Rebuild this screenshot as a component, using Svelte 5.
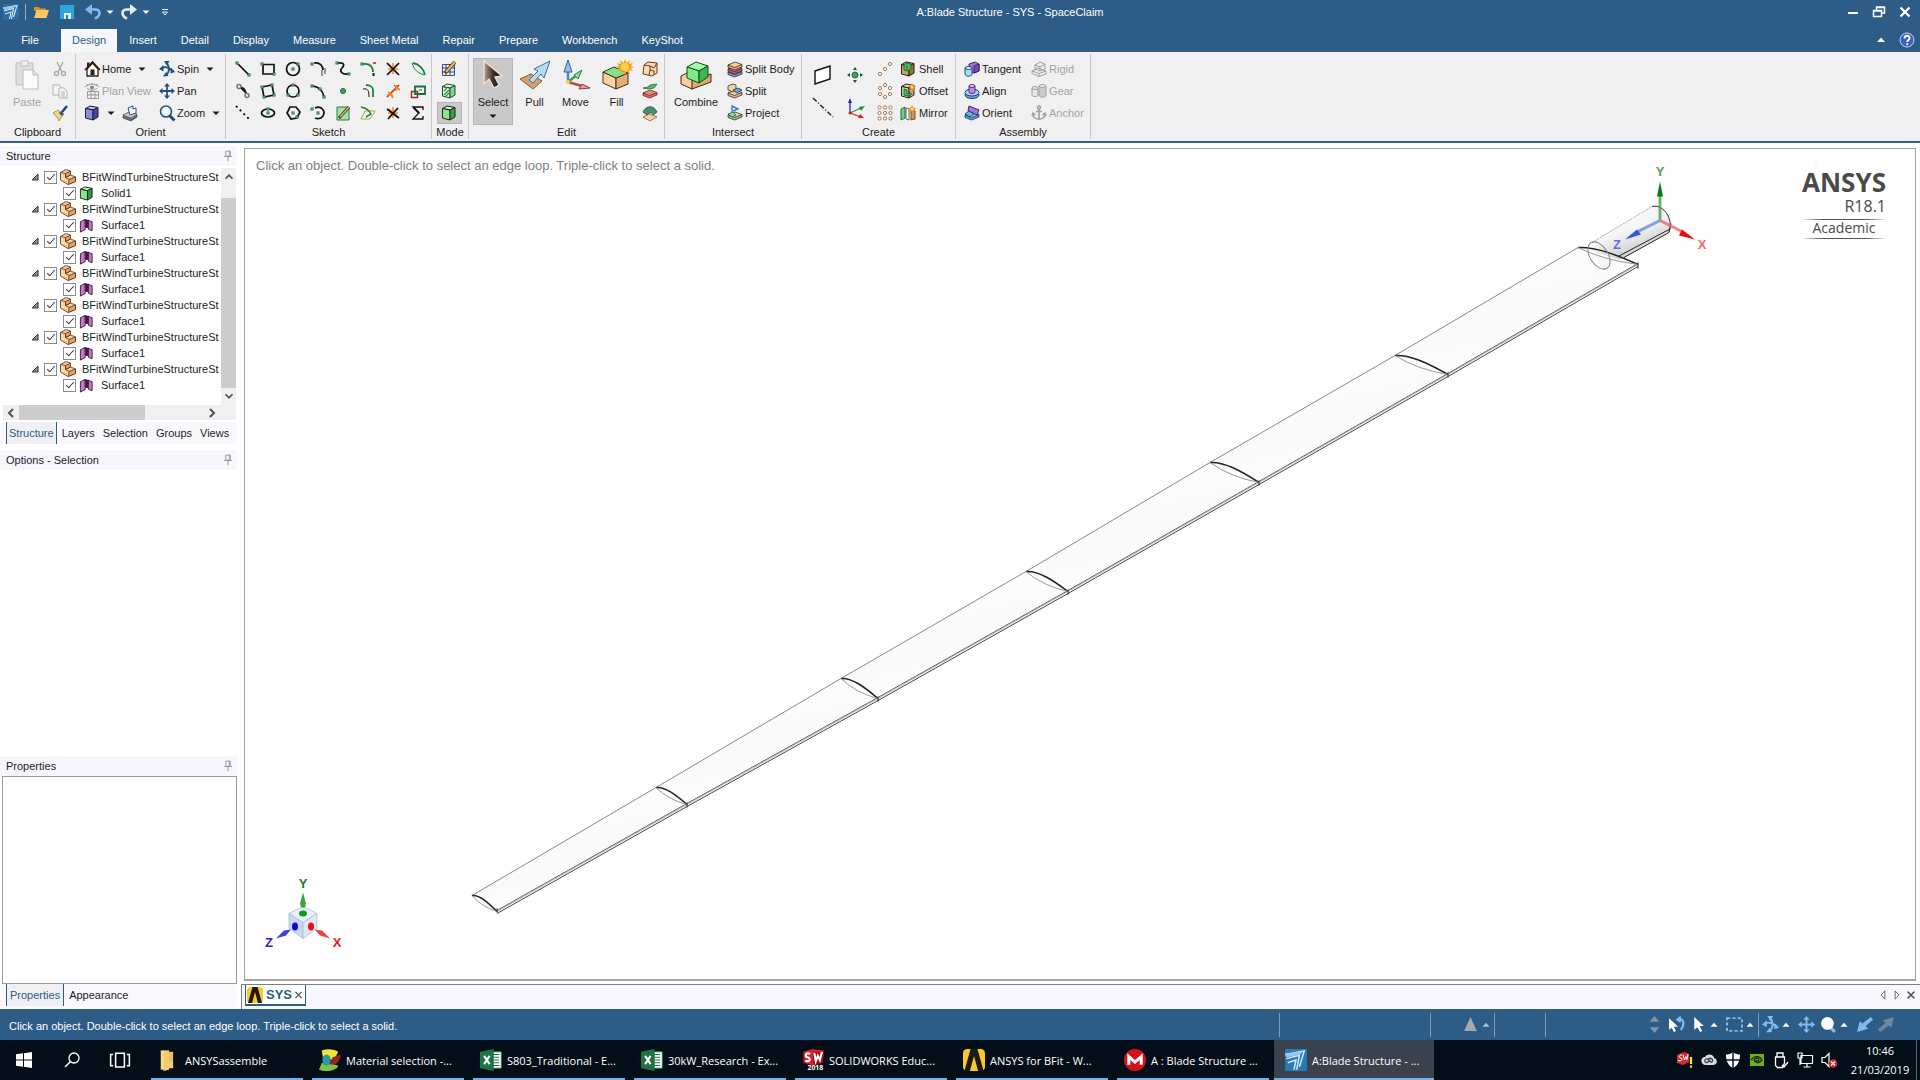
<script>
  const cube = (top, left, right, line = '#222') =>
    `<g stroke="${line}" stroke-width="1" stroke-linejoin="round"><path fill="${top}" d="M1.500 3.500 6 1l8 1.500L9.500 5z"/><path fill="${left}" d="M1.500 3.500 9 5v10L1.500 13z"/><path fill="${right}" d="M9 5l5-2.500v9.500L9 15z"/></g>`;
  const slab = (y, top, side, line = '#333') =>
    `<g stroke="${line}" stroke-width=".8" stroke-linejoin="round"><path fill="${side}" d="M1 ${y}v2.500l6.500 2.500 7.500-3v-2.500z"/><path fill="${top}" d="M1 ${y} 8 ${y - 3}l7 2.500-7.500 3z"/></g>`;
  const node = (x, y) => `<rect x="${x - 1}" y="${y - 1}" width="2" height="2" fill="#fff" stroke="#17703a" stroke-width="1"/>`;
  const cross4 = (c) =>
    `<path fill="none" stroke="${c}" stroke-width="1.800" d="M8 2v12M2 8h12"/><path fill="${c}" d="M8 0l3 3.500H5zM8 16l3-3.500H5zM0 8l3.500-3v6zM16 8l-3.500-3v6z"/>`;
  const orbit = (c) =>
    `<path fill="none" stroke="${c}" stroke-width="1.800" d="M7 2c4 3 4 9 0 12M3 7c4-2 7 0 11 3"/><path fill="${c}" d="M5 0h5.500L8 4.500zM4 15.500l5.500-.5L7 11zM0 8l4.500-4v6.500zM16 11l-4.500 1.500.5-6z"/>`;
  const dk = 'fill="none" stroke="#111" stroke-width="1.700"';
  const burst = '<path stroke="#f0882a" stroke-width="1.500" d="M8 2v11M3 8h10M4 4l8 8M12 4l-8 8"/>';
  const bolt = '<path fill="#e08a18" d="M12 0l1 2.500L16 3l-2 2 .5 3-2.500-1.500L9.500 8l.5-3-2-2 3-.5z"/><circle cx="12" cy="4" r="1.500" fill="#ffe08a"/>';
  const rings = (pts) => pts.map(([x, y]) => `<circle cx="${x}" cy="${y}" r="1.600" fill="#fff" stroke="#a5764e"/>`).join('');
  const stair =
    '<g stroke="#6b3f18" stroke-width=".9" stroke-linejoin="round"><path fill="#f9d4aa" d="M.5 3.500 6 .5l4.500 1.500v4l5 2v4.500L8 15.500.5 11z"/><path fill="#dba268" d="M5.500 4.500l5-2.500v4L5.500 8.500z"/><path fill="#dba268" d="M9 10.500 15.500 8v4.500L8.500 15.500z"/><path fill="none" d="M.5 3.500l5 1v4L9 10.500M5.500 8.500l5-2.500"/></g>';
  const spaceclaim = (bg) =>
    `<rect width="16" height="16" rx="1" fill="${bg}"/><g fill="none" stroke="#d9eaf7" stroke-width="1.100"><path d="M0 4l14-2.500L10.500 13"/><path d="M1 7l9.500-2.500L8.500 15"/><path d="M2 10l6-2-1.500 7"/></g><path fill="#9cc6e8" d="M0 3.500l14-2-4 3-9 1.500z"/>`;
  const ansys = '<rect width="16" height="16" rx="3" fill="#f9c928"/><path fill="#1d1a16" d="M5.500 0h5L15 16h-4L8 5 5 16H1z"/>';
  const excel =
    '<path fill="#fff" stroke="#1f7244" stroke-width=".7" d="M8 2h7.500v12H8z"/><path stroke="#1f7244" stroke-width=".9" d="M9 4h5M9 6h5M9 8h5M9 10h5M9 12h5"/><path fill="#1f7244" d="M0 2 10 0v16L0 14z"/><path stroke="#fff" stroke-width="1.500" d="M3 5l4 6M7 5l-4 6"/>';

  const icons = {
    app: spaceclaim('#2a6ca3'),
    space: spaceclaim('#2779b8'),
    ansys, excel, stair,
    folder: '<path fill="#d9912d" d="M1 3h5l1 1.500h6V7H1z"/><path fill="#fbc56a" d="M3.500 6H16l-2.500 8H1z"/>',
    save: '<path fill="#2ba7de" d="M1 1h14v14H1z"/><path fill="#eaf5fc" d="M5 9h7v6H5z"/><path fill="#2b78a8" d="M7 11h2v4H7z"/>',
    undo: '<path fill="none" stroke="#7fbbf2" stroke-width="2.600" d="M3 5.500h7c6 0 6 6 0 9"/><path fill="#7fbbf2" d="M0 5.500L7 0v11z"/>',
    redo: '<path fill="none" stroke="#e4edf5" stroke-width="2.600" d="M13 5.500H6c-6 0-6 6 0 9"/><path fill="#e4edf5" d="M16 5.500L9 0v11z"/>',
    custom: '<path fill="none" stroke="#e6eef5" d="M5 5.500h6M5.500 8h5L8 11z"/>',
    down: '<path fill="currentColor" d="M4.500 6.500h7L8 10z"/>',
    up: '<path fill="currentColor" d="M4 10h8L8 5.500z"/>',
    min: '<path stroke="#fff" stroke-width="2" d="M3 9h10"/>',
    restore: '<path fill="none" stroke="#fff" stroke-width="1.500" d="M2.500 6.500h8v6h-8zM5.500 6V3h8v6H11M2 7h9M5 3.500h9"/>',
    close: '<path stroke="#fff" stroke-width="2.200" d="M3.500 3.500l9 9M12.500 3.500l-9 9"/>',
    help: '<circle cx="8" cy="8" r="7" fill="#3a62c4" stroke="#c8d6ee"/><path fill="none" stroke="#fff" stroke-width="1.900" d="M5.500 6.500c0-4 5.500-3.500 5 0-.3 1.500-2.300 1.500-2.300 3.500M8.200 11.200v1.800"/>',
    paste: '<g stroke="#bdbdbd"><path fill="#dedede" d="M5 4h17v22H5z"/><path fill="#eee" d="M10 2h7v5h-7z"/><path fill="#fbfbfb" d="M12 11h10l5 5v14H12z"/><path fill="#e4e4e4" d="M22 11v5h5z"/></g>',
    cut: '<g fill="none" stroke="#a9a9a9" stroke-width="1.400"><path d="M5 1l5 10M11 1 6 11"/><circle cx="4.500" cy="12.500" r="2"/><circle cx="11.500" cy="12.500" r="2"/></g>',
    copy: '<g fill="#f4f4f4" stroke="#b3b3b3"><path d="M1 2h6l2 2v8H1z"/><path d="M7 5h5l3 3v7H7z"/><path d="M9 9h4M9 11h4M9 13h4"/></g>',
    brush: '<path fill="#ecd57c" stroke="#9b8434" stroke-width=".8" d="M1 8l5-3 5 5-4 6c-1-3-3-5-6-8z"/><path stroke="#44506b" stroke-width="3" d="M8 7l3 3"/><path stroke="#1e3f8a" stroke-width="2.500" d="M10 7l5-6"/>',
    home: '<path fill="#fffbe8" stroke="#222" stroke-width="1.300" d="M3 8v7h11V8L8.500 2z"/><path fill="none" stroke="#3a1a12" stroke-width="1.600" d="M1 9l7.500-8L16 9"/><path fill="#223" d="M6.500 8.500h4V14h-4zM3 1.500h2.500V5L3 7z"/>',
    plan: '<g fill="none" stroke="#999"><path d="M1 4c4-4 10-4 14 0M3 5c3 3 7 3 10 0M3 1l1 2M8 0v1.500M13 1l-1 2"/><path d="M3.500 8.500h11v7h-11zM3 12h11M7 8v7M11 8v7"/></g><circle cx="8" cy="4.500" r="2" fill="#888"/>',
    bluecube: cube('#b9b9f8', '#8b8bea', '#4545ad'),
    scan: '<path fill="#e7c79b" stroke="#44506b" stroke-width=".8" d="M1 10l6-3 8 2-6 4z"/><path fill="#fff" stroke="#1e4fa0" d="M6 3l5-2v3l3-1v5l-6 2z"/><path fill="#577fa8" stroke="#223" stroke-width=".6" d="M1 11l8 3 6-4v2l-6 4-8-3z"/>',
    spin: orbit('#25517e'), pan: cross4('#25517e'),
    lens: '<path stroke="#1e4a75" stroke-width="3" d="M10.500 10.500l5 5"/><circle cx="7" cy="6.500" r="5.500" fill="#f2f7fb" stroke="#25517e" stroke-width="1.600"/>',
    s0: `<path ${dk} d="M3 3l11 11"/>${node(2, 2)}${node(14, 14)}`,
    s1: `<path ${dk} d="M3 3.500h11V13H3z"/>${node(2, 3)}${node(14, 13)}`,
    s2: `<circle cx="8" cy="8" r="6.500" ${dk}/>${node(8, 8)}${node(13, 3)}`,
    s3: `<path ${dk} d="M4 2c6-1 9 3 9 7"/><path stroke="#777" stroke-width="1.500" d="M12 9v6M15 7v6"/>${node(2, 3)}`,
    s4: `<path ${dk} d="M3 2c6-1 7 2 4 5s0 7 6 6"/>${node(2, 2)}${node(14, 13)}`,
    s5: `<path fill="none" stroke="#218040" stroke-width="1.900" d="M3 3c7-1 10 3 10 8"/><path stroke="#e04b30" stroke-width="2" d="M13 2h3"/><path stroke="#222" stroke-width="2" d="M13.500 12v3"/>${node(2, 3)}`,
    s6: `${burst}<path ${dk} d="M2 2l6 6 6-6M8 8l-6 6M8 8l6 6"/>`,
    s7: `<path fill="none" stroke="#218040" stroke-width="1.800" d="M3 2c6 1 11 6 12 12"/><path fill="none" stroke="#218040" d="M2 2c2 7 6 10 12 12"/>`,
    s8: `<path stroke="#222" stroke-width="1.700" d="M4 4c6 0 6 4 8 8"/><circle cx="4" cy="3.500" r="2" fill="#eee" stroke="#777" stroke-width="1.500"/><circle cx="12" cy="12.500" r="2" fill="#eee" stroke="#777" stroke-width="1.500"/>`,
    s9: `<path ${dk} d="M2 4l10-2 2 10-10 2z"/>${node(2, 4)}${node(12, 2)}${node(14, 12)}${node(4, 14)}`,
    s10: `<circle cx="8" cy="8" r="6" ${dk}/>${node(8, 2)}${node(3, 12)}${node(13, 12)}`,
    s11: `<path ${dk} d="M3 3c6 1 10 5 11 11"/>${node(2, 3)}${node(10, 6)}${node(14, 14)}`,
    s12: '<circle cx="8" cy="8" r="2.500" fill="#3f9b5f" stroke="#17703a"/>',
    s13: '<path fill="none" stroke="#111" d="M3 6c5-1 6 2 6 8"/><path fill="none" stroke="#218040" stroke-width="1.800" d="M6 2c4 0 7 2 7 5v7"/>',
    s14: '<g stroke-width="1.700"><path stroke="#c3302a" d="M2 14 14 2"/><path stroke="#f0882a" d="M9 2l3 3 3 2M11 2v6M3 9l3 2 2 4M2 12h6"/></g>',
    s15: '<path fill="none" stroke="#a02622" stroke-width="1.400" d="M1.500 8.500h6v6h-6z"/><path fill="none" stroke="#17703a" stroke-width="1.800" d="M5 3.500h10V11H5z"/><path stroke="#17703a" d="M9 7h3"/>',
    s16: '<path stroke="#111" stroke-width="2" stroke-dasharray="2 3.300" d="M1 1l14 14"/>',
    s17: `<ellipse cx="8" cy="8" rx="6.500" ry="4" ${dk}/>${node(8, 8)}${node(8, 4)}`,
    s18: `<path ${dk} d="M5 2l6 0 4 5-3 6-6 1-4-6z"/>${node(8, 8)}${node(12, 12)}`,
    s19: `<path ${dk} d="M5 3c6-3 11 3 8 8-2 3-6 3-8 2"/>${node(2, 4)}${node(8, 8)}`,
    s20: '<path fill="#a5e0aa" stroke="#2e7a44" d="M2 2h12v13H2z"/><path stroke="#42352a" stroke-width="3" d="M4 13 14 2"/><path stroke="#d8b173" stroke-width="1.500" d="M5 12l9-10"/>',
    s21: '<path fill="#eef7e8" stroke="#9db03a" d="M1 14 5 6h10l-5 8z"/><path fill="none" stroke="#218040" stroke-width="1.500" d="M1 2c5 1 8 3 10 7l-5 3"/>',
    s22: `${burst}<path ${dk} d="M2 4l12 9M13 3 3 14"/>`,
    s23: '<path fill="none" stroke="#111" stroke-width="1.300" d="M13 5V2H3l6 6-6 6h10v-3"/><path stroke="#111" stroke-width="2" d="M3.500 2.500 9 8"/>',
    m0: '<path fill="#e6eaf6" stroke="#2b3d77" stroke-width=".9" d="M1.500 3.500h12v11h-12zM1 7h12M1 11h12M5 3v11M9 3v11"/><path stroke="#4d3b1d" stroke-width="3.500" d="M4 12 14 1"/><path stroke="#e9bd4a" stroke-width="2" d="M5 11l9-10"/>',
    m1: '<g stroke="#1f4c2c" fill="#e4f5e6"><path d="M1.500 3.500 9 5v10L1.500 13z"/><path d="M1.500 3.500 6 1l8 1.500L9.500 5z"/><path fill="#7fd68a" d="M9 5l5-2.500v9.500L9 15z"/><path stroke="#2f9440" stroke-width="1.300" d="M3 8l3-3M3 12l5-5M5 13l3-3"/></g>',
    m2: cube('#c5f7c8', '#8ae892', '#3ba14c'),
    solid: cube('#b7f5bb', '#85e68d', '#2f9440'),
    surface: '<path fill="#43154a" d="M5 1l6 1v9l-6-1z"/><path fill="#c07ac0" stroke="#4b1a52" d="M1.500 4 6.500 2v10.500l-5 2.500zM10 2.500l4 1.500v9.500l-4-1.500z"/>',
    arrow: '<defs><linearGradient id="ar" x1="0" x2="1"><stop stop-color="#b0a49c"/><stop offset=".5" stop-color="#3b302b"/><stop offset="1" stop-color="#120c0a"/></linearGradient></defs><path fill="url(#ar)" stroke="#f7e0cc" stroke-width="1.300" d="M7 2v23l5-5 5 9 5-3-4-8 7-1z"/>',
    pull: '<path fill="#d0a074" stroke="#8c5a2c" d="M1 20l11-5 11 7-9 8z"/><path fill="#b9dbf2" stroke="#3a6f9c" d="M31 2 15 10l4 2-9 9 4 3 8-9 3 4z"/>',
    move: '<g stroke-width="2.500" fill="none"><path stroke="#4a8cc0" d="M8 23V8"/><path stroke="#3f9b5f" d="M8 23l10-8"/><path stroke="#b34a4a" d="M8 23l14 4"/></g><path fill="#8fc2ea" stroke="#2c6594" d="M8 1l4 12H4z"/><path fill="#8fdca0" stroke="#2e7a44" d="M22 11l-4 9-4-4z"/><path fill="#e69a9a" stroke="#8c3636" d="M30 29l-11 1 3-5z"/><circle cx="8" cy="23" r="2" fill="#f1d34a"/>',
    fill: '<g stroke="#4a2e14"><path fill="#f8d2a5" d="M2 13v11l13 6V19z"/><path fill="#e2ae7a" d="M15 19v11l12-5V14z"/><path fill="#7fe58a" d="M2 13l11-5 14 6-12 5z"/></g><path fill="#f0a51c" d="M24 0l1.500 4L29 1l-1 4 4-1-2 3 3 1-3 1 2 3-4-1 1 4-3.500-3L24 16l-1.500-4-3.500 3 1-4-4 1 2-3-3-1 3-1-2-3 4 1-1-4 3.500 3z"/><circle cx="24" cy="8" r="4" fill="#fccf4e"/>',
    e0: '<g fill="#f9d9b8" stroke="#6b3f18"><path d="M2 4l4-3 9 1v10l-5 3-9-2z"/><path d="M2 4l6 1v4l-1 5M8 5l4 2 3-5M8 9l4 1v4" fill="none"/></g>',
    e1: slab(10, '#e58b84', '#cf6660', '#7a2d28') + '<path fill="#58b96b" stroke="#22683a" stroke-width=".8" d="M1 5l5-1 2-2 7-1-3 4-5 1z"/>',
    e2: '<path fill="#f3cfa9" stroke="#8c5a2c" stroke-width=".8" d="M1 12l6-3 8 3-7 4z"/><path fill="#46926a" stroke="#1f4c3a" stroke-width=".8" d="M1 7c3-7 11-7 14 0l-4 3c0-3-4-3-6 0z"/>',
    combine: '<g stroke="#3f2510"><path fill="#f6cfa3" d="M1 17l8-4 10 3v9l-7 5-11-5z"/><path fill="#e0a870" d="M12 21l19-6v8l-19 7z"/></g><g stroke="#134d1d"><path fill="#a5f5a8" d="M7 8l9-5 12 4-9 5z"/><path fill="#7eea85" d="M7 8l12 4v12L7 19z"/><path fill="#3fb450" d="M19 12l9-5v11l-9 6z"/></g>',
    i0: slab(11, '#8fb7ea', '#6a94d0') + slab(8, '#e8707c', '#cf5060') + slab(4, '#f6cfa3', '#e0a870'),
    i1: slab(10, '#f6cfa3', '#e7b67f') + '<path fill="#f6cfa3" stroke="#333" stroke-width=".8" d="M1 3l5-2 3 1v5l-3 2-5-2z"/><path fill="#6ea8e8" stroke="#234" stroke-width=".8" d="M6 7l5-2 4 2-5 3z"/>',
    i2: slab(10, '#f6cfa3', '#8fc796') + '<path fill="#8fe09a" stroke="#225c35" stroke-width=".8" d="M1 9l5-2 3 3-4 2z"/><path fill="none" stroke="#3b7cc4" stroke-width="1.400" d="M5 8V1l6 3-5 2"/>',
    plane: '<path fill="#fff" stroke="#111" stroke-width="1.400" d="M3 7l15-5v13L3 20z"/>',
    axis: '<path stroke="#222" stroke-width="1.400" stroke-dasharray="5 2 1 2" d="M1 1l20 19"/>',
    point: '<circle cx="11" cy="11" r="3" fill="#3f9b5f" stroke="#17703a"/><path fill="#1c5330" d="M11 3l2 3H9zM11 19l2-3H9zM3 11l3-2v4zM19 11l-3-2v4z"/>',
    origin: '<g stroke-width="1.300" fill="none"><path stroke="#2222cc" d="M6 16V5"/><path stroke="#1c9040" d="M6 16l11-5"/><path stroke="#d02020" d="M6 16l11 4"/></g><path fill="#2222cc" d="M6 1l2 5H4z"/><path fill="#1c9040" d="M21 9l-4 5-2-4z"/><path fill="#d02020" d="M20 21l-6 0 2-4z"/><circle cx="6" cy="16" r="1.500" fill="#d02020"/>',
    c0: rings([[3, 13], [8, 8], [13, 3]]),
    c1: rings([[8, 2], [13, 5], [13, 11], [8, 14], [3, 11], [3, 5]]),
    c2: rings([[2.5, 2.5], [8, 2.5], [13.5, 2.5], [2.5, 8], [8, 8], [13.5, 8], [2.5, 13.5], [8, 13.5], [13.5, 13.5]]),
    shell: cube('#e0cc84', '#c2a85c', '#8f7634') + '<path fill="#49c25a" stroke="#1c5330" stroke-width=".8" d="M4 3.500 7 2l4 1v5L8 10 4 9z"/><path stroke="#1c5330" stroke-width=".8" d="M7 4v5"/>',
    offset: cube('#f0dcae', '#a9e29a', '#c6a66b') + '<path fill="#58b96b" stroke="#1c5330" stroke-width=".8" d="M4 6l3 1v4l4-1v2l-4 1-3-1z"/>' + bolt,
    mirror: '<g stroke="#225c35" stroke-width=".9"><path fill="#6fd37c" d="M1 4l4-2v11l-4 2z"/><path fill="#fff" stroke="#555" d="M6 3l3 1v11l-3-1z"/><path fill="#c69c63" stroke="#6b3f18" d="M11 5l4 1v8l-4 1z"/></g>' + bolt,
    tangent: '<path fill="#a473d8" stroke="#321a5c" stroke-width=".9" d="M5 3l6-2 4 2v7l-5 2-5-2z"/><path fill="#7d4bb5" stroke="#321a5c" stroke-width=".9" d="M10 5l5-2v7l-5 2z"/><path fill="#a9daf7" stroke="#1d4a78" d="M1 7v6c0 3 7 3 7 0V7z"/><ellipse cx="4.500" cy="7" rx="3.500" ry="1.500" fill="#d9effc" stroke="#1d4a78"/>',
    align: '<ellipse cx="8" cy="12" rx="7" ry="3.500" fill="#6fa5dc" stroke="#1d3f78"/><ellipse cx="8" cy="9.500" rx="7" ry="3.500" fill="#a9d2f5" stroke="#1d3f78"/><path fill="#c08be0" stroke="#4b2378" stroke-width=".9" d="M5 3v6c0 2 6 2 6 0V3z"/><ellipse cx="8" cy="3" rx="3" ry="1.500" fill="#e0bdf3" stroke="#4b2378" stroke-width=".9"/>',
    orient: slab(10, '#a9daf7', '#5b9cd0', '#1d3f5c') + '<path fill="#a473d8" stroke="#321a5c" stroke-width=".9" d="M5 1l10 4-2 5-9-4z"/><path fill="#6fb4e0" stroke="#1d3f5c" stroke-width=".9" d="M1 9l4-3 5 3-4 3z"/>',
    rigid: '<g fill="#ececec" stroke="#a0a0a0"><path d="M1 10l6-3 8 3v3l-7 2.500-7-3zM1 10l7 2.500 7-2.500M8 12.500V15M4 4l5-3 5 2v5l-5 2-5-2zM4 4l5 2 5-3M9 6v4"/></g>',
    gear: '<g fill="#e6e6e6" stroke="#a0a0a0"><path d="M1 5v7c0 2 6 2 6 0V5z"/><ellipse cx="4" cy="5" rx="3" ry="1.500"/><path fill="#ccc" d="M8 3v9c0 3 7 3 7 0V3z"/><ellipse cx="11.500" cy="3" rx="3.500" ry="1.500"/></g>',
    anchor: '<g fill="none" stroke="#a0a0a0" stroke-width="1.600"><circle cx="8" cy="2.500" r="1.500"/><path d="M8 4v10.500M5 6.500h6M2 9c0 7 12 7 12 0M1 11l1-3 2.500 2M15 11l-1-3-2.500 2"/></g>',
    pin: '<path fill="none" stroke="#8a8f99" d="M5.500 2.500h5v6h-5zM9.500 2v6M3.500 8.500h9M8 9v5"/>',
    x: '<path stroke="#555" stroke-width="1.900" d="M3.500 3.500l9 9M12.500 3.500l-9 9"/>',
    prev: '<path fill="none" stroke="#444" d="M10.500 2.500v11L5.500 8z"/>',
    next: '<path fill="none" stroke="#444" d="M5.500 2.500v11l5-5.500z"/>',
    cl: '<path fill="none" stroke="#505050" stroke-width="2" d="M10 4 6 8l4 4"/>', cr: '<path fill="none" stroke="#505050" stroke-width="2" d="M6 4l4 4-4 4"/>',
    cu: '<path fill="none" stroke="#505050" stroke-width="2" d="M4 10l4-4 4 4"/>', cd: '<path fill="none" stroke="#505050" stroke-width="2" d="M4 6l4 4 4-4"/>',
    warn: '<path fill="#a3a9ad" d="M8 1l6 13H2z"/>',
    updown: '<path fill="#8195a6" d="M8 0l4.500 5.500h-9zM8 16l4.500-5.500h-9z"/>',
    curUndo: '<path fill="#fff" d="M1 2v11l2.500-2 2 4 2-1-2-4h4z"/><path fill="none" stroke="#7fbbf2" stroke-width="2" d="M10 3c5-1 6 5 2 10"/><path fill="#7fbbf2" d="M7 3.500l5-4v7z"/>',
    cur: '<path fill="#fff" d="M4 1v12l3-2.500L9.500 15l2-1-2.500-4.500h4z"/>',
    box: '<path fill="none" stroke="#7fbbf2" stroke-width="1.800" stroke-dasharray="3 2" d="M1 2h14v12H1z"/>',
    spinL: orbit('#7fbbf2'), panL: cross4('#7fbbf2'),
    lensL: '<path stroke="#7fbbf2" stroke-width="3" d="M10 11l4 4"/><circle cx="7" cy="7" r="6" fill="#fff"/>',
    back: '<path fill="#7fbbf2" d="M14 1l2 2.500-7 6 2.500 2.500L1 15 3.500 5 6 7z"/>', fwd: '<path fill="#71889d" d="M2 15l-2-2.500 7-6L4.500 4 15 1l-2.500 10L10 9z"/>',
    win: '<path fill="#fff" d="M0 2.300l7-1v6.200H0zM8 1.200 16 0v7.500H8zM0 8.500h7v6.200l-7-1zM8 8.500h8V16l-8-1.200z"/>',
    search: '<circle cx="10" cy="6" r="5" fill="none" stroke="#fff" stroke-width="1.300"/><path stroke="#fff" stroke-width="1.500" d="M6.500 9.500 1 15"/>',
    tasks: '<path fill="none" stroke="#fff" stroke-width="1.200" d="M4.500 2.500h7v11h-7zM2.500 3.500h-2v9h2M13.500 3.500h2v9h-2"/>',
    dir: '<path fill="#f8dc92" d="M2 1h6v14H2z"/><path fill="#e8bd5c" d="M7 2h4v8H7z"/><path fill="#f3cb70" d="M4 2l4-1v14l-4 1zM8 9h3v5H8z"/>',
    ces: '<path fill="#f2e233" d="M2 1c4-1.500 9-1 12 1l-3 6-8-1z"/><path fill="#98202a" d="M16 4c-1 6-5 9-9 8l3-6z"/><path fill="#7ec242" d="M2 10c3 1 8 1 12 2-1 4-9 5-14 3z"/><ellipse cx="5.500" cy="8" rx="3" ry="4" fill="#279aa6"/>',
    sw: '<path fill="#d3202a" d="M1 2l6-2 9 1-1 9-7 2-7-2z"/><path fill="#9c1018" d="M8 3l8-2-1 9-7 2z"/><path fill="none" stroke="#fff" stroke-width="1.500" d="M6 3.500C2 2 2 6 4 6s3 4-1.500 2.500M9 3l1 6 1.500-4L13 8l1.500-6"/><text x="4" y="15" font-family="Open Sans, sans-serif" font-size="5" font-weight="700" fill="#fff">2018</text>',
    mech: '<circle cx="8" cy="8" r="8" fill="#d5121c"/><path fill="none" stroke="#fff" stroke-width="2.200" d="M3.500 11.500v-6l4.500 4 4.500-4v6"/>',
    swt: '<path fill="#d3302a" d="M0 3l7-3 5 2v8l-6 3-6-2z"/><path stroke="#fff" fill="none" d="M5 3C1 3 2 6 4 6s1 4-3 2.500M6 3l1.500 5L9 4.500l1 3L11 2"/><path stroke="#f5e637" stroke-width="2.200" d="M14 5v7M14 13.500v2.200"/>',
    cc: '<path fill="#d9dcde" d="M5 13C-1 13-1 5 4 5c2-4 9-3 9 1 4 1 4 7-1 7z"/><path fill="none" stroke="#3b4248" stroke-width="1.300" d="M8 9c-3 4-6-1-3-2 3-1 4 4 6 3 2-2-1-5-4-3"/>',
    shield: '<path fill="#fff" d="M8 0c2 2 5 2.500 7 2.500C15 9 13 13.500 8 16 3 13.500 1 9 1 2.500 3 2.500 6 2 8 0z"/><path stroke="#0a1420" stroke-width="1.500" d="M8 0v16M1 8h14"/>',
    nv: '<path fill="#6fae1d" d="M1 2h14v12H1z"/><path fill="none" stroke="#16300a" stroke-width="1.300" d="M2 8c4-5 9-4 11 0-3 4-7 3-8 0 2-3 5-2 5 0-1 2-3 1-3 0"/>',
    usb: '<path fill="none" stroke="#fff" stroke-width="1.300" d="M4 5V1h6v4M2.500 5h9v6l-2 4.500h-5l-2-2zM9 13l2 2 4-5"/>',
    net: '<path fill="none" stroke="#fff" stroke-width="1.200" d="M4 3.500h11.500v8H4zM10 11v4M6.500 15h7M1 1h4v5H1zM3 6v7"/>',
    vol: '<path fill="none" stroke="#fff" stroke-width="1.200" d="M1 5.500h3l4-4v13l-4-4H1z"/><circle cx="12" cy="11.500" r="4.300" fill="#d8232c"/><path stroke="#fff" stroke-width="1.300" d="M10 9.500l4 4M14 9.500l-4 4"/>'
  };

  const menus = ['File', 'Design', 'Insert', 'Detail', 'Display', 'Measure', 'Sheet Metal', 'Repair', 'Prepare', 'Workbench', 'KeyShot'];
  const sketch = Array.from({ length: 24 }, (_, i) => 's' + i);
  const nodes = ['Solid1', 'Surface1', 'Surface1', 'Surface1', 'Surface1', 'Surface1', 'Surface1'];
  const tasks = [
    ['dir', 'ANSYSassemble'], ['ces', 'Material selection -...'], ['excel', 'S803_Traditional - E...'], ['excel', '30kW_Research - Ex...'],
    ['sw', 'SOLIDWORKS Educ...'], ['ansys', 'ANSYS for BFit - W...'], ['mech', 'A : Blade Structure ...'], ['space', 'A:Blade Structure - ...']
  ];
  const hint = 'Click an object. Double-click to select an edge loop. Triple-click to select a solid.';

  const lead = [[472, 895], [656, 787], [841, 678], [1026, 571], [1210, 462], [1395, 355], [1578, 247]];
  const trail = [[497, 911], [687, 804], [878, 698], [1068, 591], [1259, 482], [1448, 374], [1638, 264]];
  const ribs = lead.map(([x, y], i) => {
    const w = trail[i][0] - x;
    const h = trail[i][1] - y;
    return {
      top: `M${x} ${y}C${x + w * 0.3} ${y - 1} ${x + w * 0.65} ${y + h * 0.45} ${x + w} ${y + h}`,
      low: `M${x} ${y}Q${x + w * 0.4} ${y + h * 0.72} ${x + w} ${y + h}`
    };
  });
  const bays = lead.slice(1).map(([x, y], i) => {
    const a = lead[i];
    const b = trail[i];
    const c = trail[i + 1];
    return { face: `M${a}L${x},${y}L${c}L${b}Z`, front: `M${a}L${x},${y}`, rear: [0, 1, 3].map((d) => `M${b[0]},${b[1] + d - 1}L${c[0]},${c[1] + d - 1}`) };
  });
</script>

{#snippet ico(name, cls = '')}
  {@const big = ['paste', 'arrow', 'pull', 'move', 'fill', 'combine'].includes(name) ? 32 : ['plane', 'axis', 'point', 'origin'].includes(name) ? 22 : 16}
  <svg class="ico {cls}" class:big={big === 32} class:mid={big === 22} viewBox="0 0 {big} {big}" aria-hidden="true">{@html icons[name]}</svg>
{/snippet}

{#snippet tool(name, label, off = false, drop = false)}
  <button class="tool" class:off disabled={off}>{@render ico(name)}<span>{label}</span>{#if drop}{@render ico('down', 'caret')}{/if}</button>
{/snippet}

{#snippet large(name, label)}
  <button class="large" class:sel={label === 'Select'} disabled={label === 'Paste'}>
    {@render ico(name)}<span>{label}</span>{#if label === 'Select'}{@render ico('down', 'caret')}{/if}
  </button>
{/snippet}

{#snippet small(name)}
  <button class="mini" class:sel={name === 'm2'} aria-label={name}>{@render ico(name)}</button>
{/snippet}

{#snippet bar(title)}
  <header class="bar"><span>{title}</span><button aria-label="Pin {title}">{@render ico('pin')}</button></header>
{/snippet}

<div class="app">
  <div class="title">
    <div class="quick">
      {@render ico('app')}<i></i>
      <button aria-label="Open">{@render ico('folder')}</button>
      <button aria-label="Save">{@render ico('save')}</button>
      <button aria-label="Undo">{@render ico('undo')}{@render ico('down', 'caret')}</button>
      <button aria-label="Redo">{@render ico('redo')}{@render ico('down', 'caret')}</button>
      <button aria-label="Customize">{@render ico('custom')}</button>
    </div>
    <h1>A:Blade Structure - SYS - SpaceClaim</h1>
    <div class="winbtns">
      <button aria-label="Minimize">{@render ico('min')}</button>
      <button aria-label="Restore">{@render ico('restore')}</button>
      <button aria-label="Close">{@render ico('close')}</button>
    </div>
  </div>

  <nav class="menu">
    {#each menus as m}<button class:file={m === 'File'} class:on={m === 'Design'}>{m}</button>{/each}
    <span class="grow"></span>
    <button class="end" aria-label="Collapse ribbon">{@render ico('up')}</button>
    <button class="end" aria-label="Help">{@render ico('help')}</button>
  </nav>

  <div class="ribbon">
    <section class="clip"><div class="row">
      {@render large('paste', 'Paste')}
      <div class="col">{@render small('cut')}{@render small('copy')}{@render small('brush')}</div>
    </div><h2>Clipboard</h2></section>
    <section class="orient"><div class="row">
      <div class="col first">
        {@render tool('home', 'Home', false, true)}{@render tool('plan', 'Plan View', true)}
        <div class="pair"><button class="tool" aria-label="View cube">{@render ico('bluecube')}{@render ico('down', 'caret')}</button><button class="tool" aria-label="Snap view">{@render ico('scan')}</button></div>
      </div>
      <div class="col">{@render tool('spin', 'Spin', false, true)}{@render tool('pan', 'Pan')}{@render tool('lens', 'Zoom', false, true)}</div>
    </div><h2>Orient</h2></section>
    <section class="sketch"><div class="cells">{#each sketch as s}{@render small(s)}{/each}</div><h2>Sketch</h2></section>
    <section class="mode"><div class="col mid3">{@render small('m0')}{@render small('m1')}{@render small('m2')}</div><h2>Mode</h2></section>
    <section class="edit"><div class="row">
      {@render large('arrow', 'Select')}{@render large('pull', 'Pull')}{@render large('move', 'Move')}{@render large('fill', 'Fill')}
      <div class="col">{@render small('e0')}{@render small('e1')}{@render small('e2')}</div>
    </div><h2>Edit</h2></section>
    <section class="inter"><div class="row">
      {@render large('combine', 'Combine')}
      <div class="col">{@render tool('i0', 'Split Body')}{@render tool('i1', 'Split')}{@render tool('i2', 'Project')}</div>
    </div><h2>Intersect</h2></section>
    <section class="create"><div class="row">
      <div class="col two">{@render small('plane')}{@render small('axis')}</div>
      <div class="col two">{@render small('point')}{@render small('origin')}</div>
      <div class="col">{@render small('c0')}{@render small('c1')}{@render small('c2')}</div>
      <div class="col">{@render tool('shell', 'Shell')}{@render tool('offset', 'Offset')}{@render tool('mirror', 'Mirror')}</div>
    </div><h2>Create</h2></section>
    <section class="assy"><div class="row">
      <div class="col">{@render tool('tangent', 'Tangent')}{@render tool('align', 'Align')}{@render tool('orient', 'Orient')}</div>
      <div class="col">{@render tool('rigid', 'Rigid', true)}{@render tool('gear', 'Gear', true)}{@render tool('anchor', 'Anchor', true)}</div>
    </div><h2>Assembly</h2></section>
  </div>

  <div class="body">
    <aside>
      {@render bar('Structure')}
      <div class="treebox">
        <div class="tree">
          {#each nodes as n}
            <label class="branch"><svg class="exp" viewBox="0 0 8 8"><path fill="#8a8a8a" stroke="#333" d="M7 1v6H1z" /></svg><input type="checkbox" checked />{@render ico('stair')}<span>BFitWindTurbineStructureSt</span></label>
            <label class="leaf"><input type="checkbox" checked />{@render ico(n === 'Solid1' ? 'solid' : 'surface')}<span>{n}</span></label>
          {/each}
        </div>
        <div class="vs">{@render ico('cu')}<div class="vthumb"></div>{@render ico('cd')}</div>
      </div>
      <div class="hs">{@render ico('cl')}<div class="htrack"><div class="hthumb"></div></div>{@render ico('cr')}</div>
      <div class="tabs"><button class="on">Structure</button><button>Layers</button><button>Selection</button><button>Groups</button><button>Views</button></div>
      {@render bar('Options - Selection')}
      <div class="opts"></div>
      {@render bar('Properties')}
      <div class="props"></div>
      <div class="tabs low"><button class="on">Properties</button><button>Appearance</button></div>
    </aside>

    <main>
      <div class="view">
        <svg class="scene" viewBox="245 149 1670 829" preserveAspectRatio="xMidYMid meet">
          <defs>
            <linearGradient id="cyl" x1="0" y1="0" x2=".5" y2="1"><stop stop-color="#fff" /><stop offset=".5" stop-color="#f4f4f4" /><stop offset="1" stop-color="#b9b9b9" /></linearGradient>
            <linearGradient id="face" x1="0" y1="0" x2=".4" y2="1"><stop stop-color="#fff" /><stop offset=".6" stop-color="#f9f9f9" /><stop offset="1" stop-color="#fcfcfc" /></linearGradient>
          </defs>
          <path fill="url(#cyl)" d="M1592 242 1652 206C1664 204 1673 220 1669 232L1618 260 1600 268Z" />
          {#each bays as b}
            <path fill="url(#face)" fill-opacity=".85" d={b.face} />
            <path fill="none" stroke="#888" d={b.front} />
            <path fill="none" stroke="#555" d={b.rear[0]} /><path fill="none" stroke="#bbb" d={b.rear[1]} /><path fill="none" stroke="#444" d={b.rear[2]} />
          {/each}
          {#each ribs as r}
            <path fill="none" stroke="#222" stroke-width="1.500" d={r.top} /><path fill="none" stroke="#999" d={r.low} />
          {/each}
          <path fill="none" stroke="#222" d="M1448 372v5M1259 480v5M1068 589v5M878 696v5M687 802v5M497 908v4M1638 262v6" />
          <g fill="none">
            <path stroke="#aaa" stroke-dasharray="2 1" d="M1592 242 1652 206" /><path stroke="#222" d="M1652 206C1664 203 1674 220 1669 231M1669 229 1618 256M1671 223 1669 232 1624 257" />
            <ellipse cx="1599" cy="255" rx="9" ry="15" transform="rotate(-32 1599 255)" stroke="#888" />
          </g>
          <g stroke-width="3" opacity=".8"><path stroke="#4aa04a" d="M1660 220v-26" /><path stroke="#e66" d="M1660 220l22 11" /><path stroke="#6a8ae0" d="M1660 220l-22 11" /></g>
          <path fill="#0b7a14" d="M1660 181l3 15h-6z" /><path fill="#e30b0b" d="M1695 239l-16-4 3-6z" /><path fill="#2f57d6" d="M1625 239l12-10 4 5z" />
          <g class="axis"><text x="1660" y="175" fill="#58a058">Y</text><text x="1702" y="248" fill="#f06a6a">X</text><text x="1617" y="248" fill="#6a6af0">Z</text></g>
          <g stroke="#a9bcd9" stroke-width=".8"><path fill="#eaf3fb" d="M289 913l14-7 14 7-14 9z" /><path fill="#cbd8f0" d="M289 913l14 9v16l-14-10z" /><path fill="#dfe7f5" d="M317 913l-14 9v16l14-10z" /></g>
          <g><path fill="#3aa43a" d="M303 892l3 11-1 4h-4l-1-4z" /><path fill="#3f3fe0" d="M276 938l8-8 7-1-5 6z" /><path fill="#e54444" d="M330 938l-8-8-7-1 5 6z" />
            <ellipse cx="303" cy="913" rx="4" ry="3" fill="#0f9c1c" /><ellipse cx="295" cy="926" rx="3" ry="4" fill="#0a0ad0" /><ellipse cx="311" cy="926" rx="3" ry="4" fill="#e80c0c" /></g>
          <g class="axis"><text x="303" y="887" fill="#1d7a1d">Y</text><text x="337" y="946" fill="#e01a1a">X</text><text x="269" y="946" fill="#2626c8">Z</text></g>
        </svg>
        <p class="hint">{hint}</p>
        <div class="brand"><b>ANSYS</b><span>R18.1</span><em>Academic</em></div>
      </div>
      <div class="docs">
        <button class="doc">{@render ico('ansys')}<b>SYS</b>{@render ico('x', 'tiny')}</button>
        <span class="grow"></span>
        <button aria-label="Previous">{@render ico('prev', 'tiny')}</button><button aria-label="Next">{@render ico('next', 'tiny')}</button><button aria-label="Close tab">{@render ico('x', 'tiny')}</button>
      </div>
    </main>
  </div>

  <footer class="status">
    <p>{hint}</p>
    <div class="seg s1"></div>
    <div class="seg s2">{@render ico('warn')}{@render ico('up', 'caret lightblue')}</div>
    <div class="seg s3"></div>
    <div class="seg s4">
      {@render ico('updown')}{@render ico('curUndo')}
      <span>{@render ico('cur')}{@render ico('up', 'caret')}</span>
      <span>{@render ico('box')}{@render ico('up', 'caret')}</span>
    </div>
    <div class="seg s5">
      <span>{@render ico('spinL')}{@render ico('up', 'caret')}</span>{@render ico('panL')}
      <span>{@render ico('lensL')}{@render ico('up', 'caret')}</span>{@render ico('back')}{@render ico('fwd')}
    </div>
  </footer>

  <div class="taskbar">
    <button class="sys" aria-label="Start">{@render ico('win')}</button><button class="sys" aria-label="Search">{@render ico('search')}</button><button class="sys" aria-label="Task view">{@render ico('tasks', 'wide')}</button>
    <div class="tasks">{#each tasks as [i, t], n}<button class="task" class:active={n === 7}>{@render ico(i)}<span>{t}</span></button>{/each}</div>
    <div class="tray">{#each ['swt', 'cc', 'shield', 'nv', 'usb', 'net', 'vol'] as t}{@render ico(t)}{/each}</div>
    <div class="clock"><span>10:46</span><span>21/03/2019</span></div>
  </div>
</div>

<style>
  :global(body) { margin: 0; background: #fff; }
  .app { min-height: 100vh; display: flex; flex-direction: column; font: 11px/16px 'Liberation Sans', sans-serif; color: #1c1c1c; }
  button { font: inherit; color: inherit; background: none; border: 0; padding: 0; margin: 0; display: flex; align-items: center; flex: none; }
  h1, h2, p { margin: 0; font-size: inherit; font-weight: 400; }
  .ico { width: 16px; height: 16px; flex: none; display: block; overflow: visible; }
  .big { width: 32px; height: 32px; }
  .mid { width: 22px; height: 22px; }
  .grow { flex: 1; }

  .title { height: 23px; background: #2d5c86; color: #fff; display: flex; align-items: center; }
  .quick { width: 177px; padding-left: 3px; display: flex; align-items: center; gap: 10px; }
  .quick i { width: 1px; height: 16px; background: #8fabc4; margin-right: -3px; margin-left: -4px; }
  .quick .caret { margin-left: 1px; margin-right: -7px; }
  .title h1 { flex: 1; text-align: center; font-size: 11px; }
  .winbtns { width: 80px; display: flex; gap: 10px; padding-left: 5px; box-sizing: border-box; }
  .menu { height: 29px; background: #2d5c86; color: #fff; display: flex; align-items: flex-end; }
  .menu button { height: 23px; padding: 0 12px 2px; justify-content: center; box-sizing: border-box; }
  .menu .file { width: 60px; margin-right: 1px; }
  .menu .on { background: #f5f6f9; color: #2d5c86; padding: 0 11px 2px; }
  .menu .end { padding: 0 5px 2px; }

  .ribbon { height: 89px; background: #f0f0f0; border-bottom: 2px solid #2d5c86; display: flex; }
  section { display: flex; flex-direction: column; padding: 4px 0 3px; box-sizing: border-box; border-right: 1px solid #c6c6c6; margin: 2px 0; }
  section h2 { text-align: center; line-height: 17px; }
  .row { display: flex; height: 66px; }
  .col { display: flex; flex-direction: column; flex: none; }
  .tool { height: 22px; gap: 2px; white-space: nowrap; }
  .tool .caret { margin-left: 1px; }
  .off, .large:disabled { color: #a3a3a3; }
  .mini { width: 25px; height: 22px; justify-content: center; }
  .two .mini { width: 32px; height: 33px; }
  .sel { background: #c9c9c9; box-shadow: inset 0 0 0 1px #b5b5b5; }
  .large { flex-direction: column; width: 41px; height: 67px; gap: 3px; padding-top: 1px; }
  .large .caret { margin-top: -5px; }
  .clip { width: 76px; }
  .clip .large { width: 46px; margin-left: 4px; }
  .clip .mini { width: 20px; }
  .orient { width: 150px; }
  .orient .row { padding-left: 8px; }
  .first { width: 75px; }
  .pair { display: flex; gap: 3px; }
  .sketch { width: 206px; }
  .cells { display: grid; grid-template-columns: repeat(8, 25px); padding-left: 4px; height: 66px; }
  .mode { width: 37px; }
  .mid3 { align-items: center; height: 66px; margin-right: 2px; }
  .edit { width: 196px; }
  .edit .row { padding-left: 4px; }
  .edit .sel { width: 40px; margin-right: 1px; }
  .inter { width: 137px; }
  .inter .large { width: 62px; }
  .create { width: 154px; }
  .create .row { padding-left: 5px; }
  .create .col:nth-child(3) .mini { width: 28px; }
  .create .tool { gap: 3px; }
  .create .col:last-child { padding-left: 1px; }
  .assy { width: 135px; }
  .assy .row { padding-left: 8px; }
  .assy .col { width: 67px; }

  .body { flex: 1; display: flex; gap: 4px; min-height: 0; }
  aside { width: 237px; flex: none; display: flex; flex-direction: column; background: #fff; padding-top: 3px; box-sizing: border-box; }
  .bar { height: 20px; flex: none; display: flex; align-items: center; justify-content: space-between; background: #f6f6fc; padding: 0 2px 0 6px; }
  .bar .ico { width: 14px; height: 14px; }
  .treebox { height: 237px; margin-top: 2px; display: flex; padding-left: 3px; }
  .tree { flex: 1; overflow: hidden; padding-top: 1px; }
  .tree label { display: flex; align-items: center; height: 16px; overflow: hidden; white-space: nowrap; }
  .branch { padding-left: 28px; }
  .exp { width: 8px; height: 8px; margin-right: 5px; flex: none; }
  .branch .ico { margin: 0 6px 0 3px; }
  .leaf { padding-left: 60px; }
  .leaf .ico { width: 15px; height: 15px; margin: 0 7px 0 3px; }
  input { appearance: none; width: 13px; height: 13px; border: 1px solid #8c8c8c; margin: 0; flex: none; background: #fff; display: grid; place-items: center; }
  input:checked::after { content: ''; width: 3px; height: 7px; border: solid #333; border-width: 0 1px 1px 0; transform: rotate(42deg); margin-bottom: 2px; }
  .vs { width: 15px; margin-right: 1px; background: #f0f0f0; display: flex; flex-direction: column; align-items: center; padding: 1px 0; box-sizing: border-box; }
  .vs .ico { width: 14px; height: 16px; }
  .vthumb { flex: 1; width: 100%; margin-top: 13px; background: #cdcdcd; }
  .hs { height: 15px; background: #f0f0f0; margin: 0 1px 0 3px; display: flex; align-items: center; padding-right: 16px; }
  .htrack { flex: 1; height: 15px; }
  .hthumb { width: 68%; height: 15px; background: #cdcdcd; }
  .tabs { height: 22px; margin: 2px 0 6px; padding-left: 6px; background: #f9f9fd; display: flex; flex: none; }
  .tabs button { padding: 0 4px; }
  .tabs .on { color: #2d5c86; background: #f0f0f2; border: solid #2d5c86; border-width: 0 1px; padding: 0 2px; margin-right: 1px; }
  .opts { flex: 285; }
  .props { flex: 205; border: 1px solid #999; margin-left: 2px; }
  .low { margin: 0; padding-bottom: 3px; height: 22px; }
  .low .on { padding: 0 3px; }

  main { flex: 1; min-width: 0; display: flex; flex-direction: column; padding-top: 5px; }
  .view { position: relative; flex: 1; min-height: 0; border: 1px solid #a3a58f; border-bottom: 2px solid #a8a69b; margin: 0 4px 3px 3px; background: #fefefe; overflow: hidden; }
  .scene { position: absolute; inset: 0; width: 100%; height: 100%; }
  .axis { font: 700 13px 'Liberation Sans', sans-serif; text-anchor: middle; }
  .hint { position: relative; padding: 9px 11px; font-size: 13px; color: #808080; }
  .brand { position: absolute; top: 16px; right: 29px; width: 84px; display: flex; flex-direction: column; color: #4a4a4a; font-family: 'Open Sans', sans-serif; }
  .brand b { font-size: 26px; line-height: 34px; font-weight: 700; text-align: right; }
  .brand span { font-size: 16px; line-height: 14px; text-align: right; margin-bottom: 6px; }
  .brand em { font-style: normal; font-size: 14px; line-height: 16px; text-align: center; padding-bottom: 2px; border: solid; border-width: 1px 0; border-image: linear-gradient(90deg, transparent, #555 25%, #555 75%, transparent) 1; }
  .docs { height: 24px; flex: none; display: flex; border-top: 1px solid #777f8c; border-left: 1px solid #777f8c; background: #f7f7fd; padding: 0 2px 0 3px; }
  .docs > button { width: 14px; justify-content: center; height: 20px; }
  .docs .doc { width: 61px; box-sizing: border-box; height: 21px; border: 1px solid #2d5c86; border-top: 0; border-bottom-width: 2px; background: #fff; color: #2d5c86; gap: 3px; }
  .doc b { font-size: 13px; font-weight: 600; }
  .tiny { width: 12px; height: 12px; }
  .doc .tiny { width: 11px; margin-left: -2px; }

  .status { height: 31px; flex: none; background: #2d5c86; color: #fff; display: flex; align-items: center; }
  .status p { flex: 1; padding: 2px 0 0 9px; }
  .seg { height: 24px; border-left: 1px solid #7d9cb8; display: flex; align-items: center; box-sizing: border-box; }
  .status .ico { width: 17px; height: 17px; }
  .status .caret { width: 14px; height: 14px; }
  .seg span { display: flex; align-items: center; }
  .lightblue { color: #9cc6ee; }
  .s1 { width: 151px; }
  .s2 { width: 64px; padding-left: 31px; }
  .s3 { width: 51px; }
  .s4 { width: 213px; justify-content: flex-end; gap: 5px; padding-right: 1px; }
  .s5 { width: 162px; padding-left: 3px; gap: 5px; }

  .taskbar { height: 40px; flex: none; background: #040e18; color: #fff; display: flex; font: 11px/19px 'Open Sans', sans-serif; }
  .sys { width: 48px; justify-content: center; }
  .sys .wide { width: 20px; height: 20px; }
  .tasks { flex: 1; display: flex; gap: 1px; padding-left: 3px; }
  .task { width: 160px; padding-left: 11px; gap: 5px; position: relative; white-space: nowrap; box-sizing: border-box; }
  .task .ico { width: 22px; height: 22px; }
  .task::after { content: ''; position: absolute; left: 4px; right: 4px; bottom: 0; height: 2px; background: #76b0e4; }
  .active { background: #3a434d; }
  .active::after { left: 0; right: 0; }
  .tray { display: flex; align-items: center; gap: 8px; padding-right: 7px; }
  .clock { width: 72px; display: flex; flex-direction: column; justify-content: center; align-items: center; border-right: 1px solid #56606a; margin-right: 3px; }
</style>
